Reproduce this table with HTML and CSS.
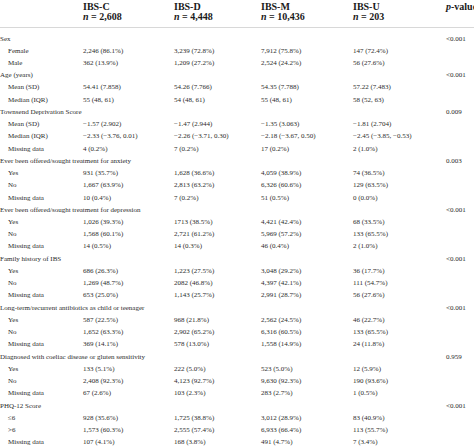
FILE: index.html
```html
<!DOCTYPE html>
<html>
<head>
<meta charset="utf-8">
<link rel="stylesheet" href="styles.css">
</head>
<body>
<div class="table">
  <div class="head">
    <div></div>
    <div class="hc">IBS-C<br><i>n</i> = 2,608</div>
    <div class="hc">IBS-D<br><i>n</i> = 4,448</div>
    <div class="hc">IBS-M<br><i>n</i> = 10,436</div>
    <div class="hc">IBS-U<br><i>n</i> = 203</div>
    <div class="hc"><i>p</i>-value</div>
  </div>
  <div class="body">
    <div class="row grp"><div class="lab">Sex</div><div class="p">&lt;0.001</div></div>
    <div class="row"><div class="sub">Female</div><div>2,246 (86.1%)</div><div>3,239 (72.8%)</div><div>7,912 (75.8%)</div><div>147 (72.4%)</div><div></div></div>
    <div class="row"><div class="sub">Male</div><div>362 (13.9%)</div><div>1,209 (27.2%)</div><div>2,524 (24.2%)</div><div>56 (27.6%)</div><div></div></div>
    <div class="row grp"><div class="lab">Age (years)</div><div class="p">&lt;0.001</div></div>
    <div class="row"><div class="sub">Mean (SD)</div><div>54.41 (7.858)</div><div>54.26 (7.766)</div><div>54.35 (7.788)</div><div>57.22 (7.483)</div><div></div></div>
    <div class="row"><div class="sub">Median (IQR)</div><div>55 (48, 61)</div><div>54 (48, 61)</div><div>55 (48, 61)</div><div>58 (52, 63)</div><div></div></div>
    <div class="row grp"><div class="lab">Townsend Deprivation Score</div><div class="p">0.009</div></div>
    <div class="row"><div class="sub">Mean (SD)</div><div>−1.57 (2.902)</div><div>−1.47 (2.944)</div><div>−1.35 (3.063)</div><div>−1.81 (2.704)</div><div></div></div>
    <div class="row"><div class="sub">Median (IQR)</div><div>−2.33 (−3.76, 0.01)</div><div>−2.26 (−3.71, 0.30)</div><div>−2.18 (−3.67, 0.50)</div><div>−2.45 (−3.85, −0.53)</div><div></div></div>
    <div class="row"><div class="sub">Missing data</div><div>4 (0.2%)</div><div>7 (0.2%)</div><div>17 (0.2%)</div><div>2 (1.0%)</div><div></div></div>
    <div class="row grp"><div class="lab">Ever been offered/sought treatment for anxiety</div><div class="p">0.003</div></div>
    <div class="row"><div class="sub">Yes</div><div>931 (35.7%)</div><div>1,628 (36.6%)</div><div>4,059 (38.9%)</div><div>74 (36.5%)</div><div></div></div>
    <div class="row"><div class="sub">No</div><div>1,667 (63.9%)</div><div>2,813 (63.2%)</div><div>6,326 (60.6%)</div><div>129 (63.5%)</div><div></div></div>
    <div class="row"><div class="sub">Missing data</div><div>10 (0.4%)</div><div>7 (0.2%)</div><div>51 (0.5%)</div><div>0 (0.0%)</div><div></div></div>
    <div class="row grp"><div class="lab">Ever been offered/sought treatment for depression</div><div class="p">&lt;0.001</div></div>
    <div class="row"><div class="sub">Yes</div><div>1,026 (39.3%)</div><div>1713 (38.5%)</div><div>4,421 (42.4%)</div><div>68 (33.5%)</div><div></div></div>
    <div class="row"><div class="sub">No</div><div>1,568 (60.1%)</div><div>2,721 (61.2%)</div><div>5,969 (57.2%)</div><div>133 (65.5%)</div><div></div></div>
    <div class="row"><div class="sub">Missing data</div><div>14 (0.5%)</div><div>14 (0.3%)</div><div>46 (0.4%)</div><div>2 (1.0%)</div><div></div></div>
    <div class="row grp"><div class="lab">Family history of IBS</div><div class="p">&lt;0.001</div></div>
    <div class="row"><div class="sub">Yes</div><div>686 (26.3%)</div><div>1,223 (27.5%)</div><div>3,048 (29.2%)</div><div>36 (17.7%)</div><div></div></div>
    <div class="row"><div class="sub">No</div><div>1,269 (48.7%)</div><div>2082 (46.8%)</div><div>4,397 (42.1%)</div><div>111 (54.7%)</div><div></div></div>
    <div class="row"><div class="sub">Missing data</div><div>653 (25.0%)</div><div>1,143 (25.7%)</div><div>2,991 (28.7%)</div><div>56 (27.6%)</div><div></div></div>
    <div class="row grp"><div class="lab">Long-term/recurrent antibiotics as child or teenager</div><div class="p">&lt;0.001</div></div>
    <div class="row"><div class="sub">Yes</div><div>587 (22.5%)</div><div>968 (21.8%)</div><div>2,562 (24.5%)</div><div>46 (22.7%)</div><div></div></div>
    <div class="row"><div class="sub">No</div><div>1,652 (63.3%)</div><div>2,902 (65.2%)</div><div>6,316 (60.5%)</div><div>133 (65.5%)</div><div></div></div>
    <div class="row"><div class="sub">Missing data</div><div>369 (14.1%)</div><div>578 (13.0%)</div><div>1,558 (14.9%)</div><div>24 (11.8%)</div><div></div></div>
    <div class="row grp"><div class="lab">Diagnosed with coeliac disease or gluten sensitivity</div><div class="p">0.959</div></div>
    <div class="row"><div class="sub">Yes</div><div>133 (5.1%)</div><div>222 (5.0%)</div><div>523 (5.0%)</div><div>12 (5.9%)</div><div></div></div>
    <div class="row"><div class="sub">No</div><div>2,408 (92.3%)</div><div>4,123 (92.7%)</div><div>9,630 (92.3%)</div><div>190 (93.6%)</div><div></div></div>
    <div class="row"><div class="sub">Missing data</div><div>67 (2.6%)</div><div>103 (2.3%)</div><div>283 (2.7%)</div><div>1 (0.5%)</div><div></div></div>
    <div class="row grp"><div class="lab">PHQ-12 Score</div><div class="p">&lt;0.001</div></div>
    <div class="row"><div class="sub">≤6</div><div>928 (35.6%)</div><div>1,725 (38.8%)</div><div>3,012 (28.9%)</div><div>83 (40.9%)</div><div></div></div>
    <div class="row"><div class="sub">&gt;6</div><div>1,573 (60.3%)</div><div>2,555 (57.4%)</div><div>6,933 (66.4%)</div><div>113 (55.7%)</div><div></div></div>
    <div class="row"><div class="sub">Missing data</div><div>107 (4.1%)</div><div>168 (3.8%)</div><div>491 (4.7%)</div><div>7 (3.4%)</div><div></div></div>
  </div>
</div>
</body>
</html>
```
FILE: styles.css
```css
html, body {
  margin: 0;
  padding: 0;
  background: #ffffff;
  overflow: hidden;
}
body {
  width: 474px;
  height: 446px;
  font-family: "Liberation Serif", "Times New Roman", serif;
  color: #2b2b2b;
}
.table {
  width: 474px;
}
.head,
.row {
  display: grid;
  grid-template-columns: 83px 91px 87px 92px 93px 28px;
}
.head {
  box-sizing: border-box;
  height: 27.5px;
  padding-top: 2px;
  border-bottom: 1.5px solid #d8d8d8;
}
.hc {
  font-weight: bold;
  font-size: 10px;
  line-height: 10px;
  color: #1a1a1a;
  white-space: nowrap;
}
.body {
  padding-top: 5px;
}
.row {
  height: 12.24px;
  font-size: 7px;
  line-height: 12.24px;
  white-space: nowrap;
}
.grp .lab {
  grid-column: 1 / 6;
}
.grp .p {
  grid-column: 6 / 7;
}
.sub {
  padding-left: 8px;
}
```
